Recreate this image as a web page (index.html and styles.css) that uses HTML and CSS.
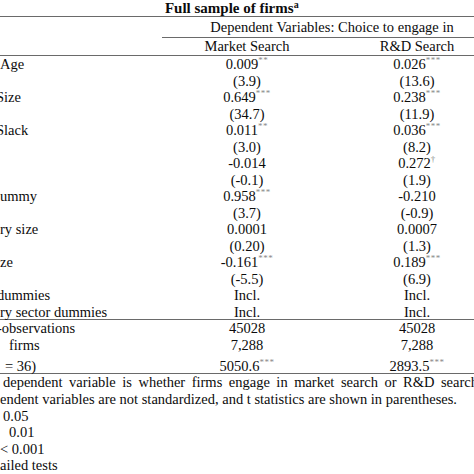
FILE: index.html
```html
<!DOCTYPE html>
<html>
<head>
<meta charset="utf-8">
<link rel="stylesheet" href="styles.css">
</head>
<body>
<div class="page">
  <div class="wrap">
    <div class="row h1 rule">
      <div class="title">Full sample of firms<sup class="sa">a</sup></div>
    </div>
    <div class="row h2">
      <div class="lab"></div>
      <div class="span2 rule">Dependent Variables: Choice to engage in</div>
    </div>
    <div class="row h3 rule">
      <div class="lab"></div>
      <div class="c">Market Search</div>
      <div class="c">R&amp;D Search</div>
    </div>

    <div class="row d"><div class="lab">Age</div><div class="c">0.009<sup>**</sup></div><div class="c">0.026<sup>***</sup></div></div>
    <div class="row d"><div class="lab"></div><div class="c">(3.9)</div><div class="c">(13.6)</div></div>
    <div class="row d"><div class="lab"><span class="k4">Size</span></div><div class="c">0.649<sup>***</sup></div><div class="c">0.238<sup>***</sup></div></div>
    <div class="row d"><div class="lab"></div><div class="c">(34.7)</div><div class="c">(11.9)</div></div>
    <div class="row d"><div class="lab"><span class="k4">Slack</span></div><div class="c">0.011<sup>**</sup></div><div class="c">0.036<sup>***</sup></div></div>
    <div class="row d"><div class="lab"></div><div class="c">(3.0)</div><div class="c">(8.2)</div></div>
    <div class="row d"><div class="lab"></div><div class="c">-0.014</div><div class="c">0.272<sup>†</sup></div></div>
    <div class="row d"><div class="lab"></div><div class="c">(-0.1)</div><div class="c">(1.9)</div></div>
    <div class="row d"><div class="lab">ummy</div><div class="c">0.958<sup>***</sup></div><div class="c">-0.210</div></div>
    <div class="row d"><div class="lab"></div><div class="c">(3.7)</div><div class="c">(-0.9)</div></div>
    <div class="row d"><div class="lab">ry size</div><div class="c">0.0001</div><div class="c">0.0007</div></div>
    <div class="row d"><div class="lab"></div><div class="c">(0.20)</div><div class="c">(1.3)</div></div>
    <div class="row d"><div class="lab">ze</div><div class="c">-0.161<sup>***</sup></div><div class="c">0.189<sup>***</sup></div></div>
    <div class="row d"><div class="lab"></div><div class="c">(-5.5)</div><div class="c">(6.9)</div></div>
    <div class="row d"><div class="lab"><span class="k3">dummies</span></div><div class="c">Incl.</div><div class="c">Incl.</div></div>
    <div class="row d rule"><div class="lab">ry sector dummies</div><div class="c">Incl.</div><div class="c">Incl.</div></div>

    <div class="row d"><div class="lab"><span class="k3">-observations</span></div><div class="c">45028</div><div class="c">45028</div></div>
    <div class="row d"><div class="lab"><span class="p9">firms</span></div><div class="c">7,288</div><div class="c">7,288</div></div>
    <div class="row last rule"><div class="lab"><span class="p5">= 36)</span></div><div class="c">5050.6<sup>***</sup></div><div class="c">2893.5<sup>***</sup></div></div>
  </div>

  <div class="notes">
    <div class="just">dependent variable is whether firms engage in market search or R&amp;D search</div>
    <div class="nl">endent variables are not standardized, and t statistics are shown in parentheses.</div>
    <div class="nl"><span class="p3">0.05</span></div>
    <div class="nl"><span class="p9">0.01</span></div>
    <div class="nl">&lt; 0.001</div>
    <div class="nl">ailed tests</div>
  </div>
</div>
</body>
</html>
```

FILE: styles.css
```css
html, body {
  margin: 0;
  padding: 0;
  background: #ffffff;
}
body {
  width: 474px;
  height: 474px;
  overflow: hidden;
  font-family: "Liberation Serif", "Times New Roman", serif;
  font-size: 14.5px;
  color: #0c0c0c;
}
.page {
  width: 474px;
  overflow: hidden;
}
.wrap {
  margin-left: -28px;
  width: 530px;
}
.row {
  display: grid;
  grid-template-columns: 190px 170px 170px;
  box-sizing: border-box;
}
.rule {
  border-bottom: 1.5px solid #6a6a6a;
  box-sizing: border-box;
}
.h1 {
  display: block;
  height: 17px;
  line-height: 16px;
}
.title {
  text-align: center;
  font-weight: bold;
  font-size: 15px;
  padding-right: 10px;
}
.sa {
  font-size: 10px;
  font-weight: bold;
  color: #111;
  vertical-align: 5px;
  line-height: 0;
}
.h2 {
  height: 21px;
  line-height: 21px;
}
.span2 {
  grid-column: 2 / span 2;
  text-align: center;
  height: 21px;
  line-height: 20px;
}
.h3 {
  height: 18px;
  line-height: 17px;
}
.d {
  height: 16.5px;
  line-height: 16.5px;
}
.last {
  height: 21px;
  line-height: 20px;
  padding-top: 3px;
}
.lab {
  padding-left: 28px;
  white-space: nowrap;
}
.c {
  text-align: center;
  white-space: nowrap;
}
sup {
  font-size: 9px;
  color: #888;
  vertical-align: 6px;
  line-height: 0;
  letter-spacing: 0.5px;
}
.k4 { margin-left: -4px; }
.k3 { margin-left: -3px; }
.p9 { margin-left: 9px; }
.p5 { margin-left: 5px; }
.p3 { margin-left: 3px; }
.just {
  width: 475px;
  padding-left: 3px;
  text-align: justify;
  text-align-last: justify;
  line-height: 17px;
  white-space: nowrap;
}
.nl {
  line-height: 16.5px;
  white-space: nowrap;
}
```
